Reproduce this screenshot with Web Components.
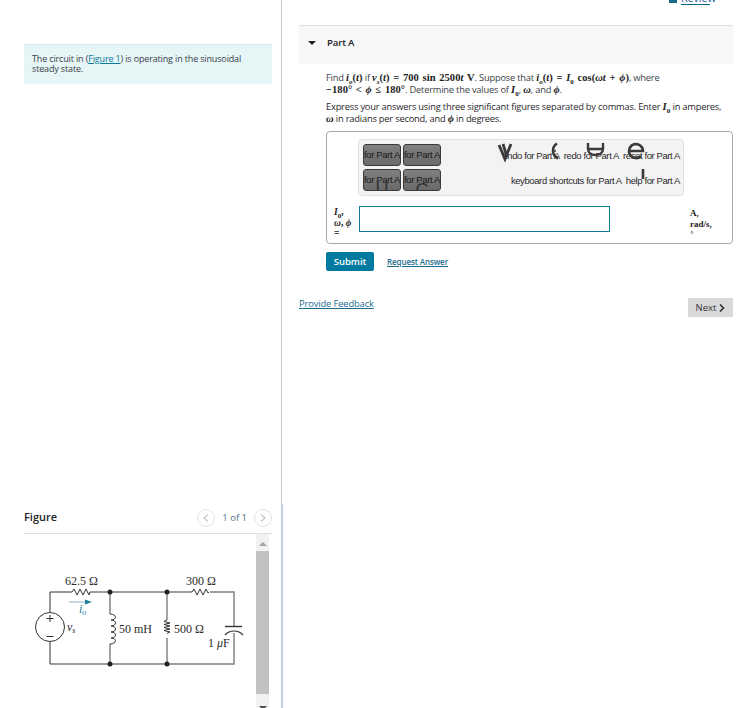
<!DOCTYPE html>
<html><head><meta charset="utf-8"><style>
html,body{margin:0;padding:0;background:#fff}
body{font-family:"Open Sans","Noto Sans",sans-serif;color:#2c3338}
</style></head><body>
<x-app>
  <x-intro slot="left">The circuit in (<a>Figure 1</a>) is operating in the sinusoidal steady state.</x-intro>
  <x-figure slot="left"></x-figure>
  <x-part slot="right"></x-part>
</x-app>
<script>
const def=(name,html)=>customElements.define(name,class extends HTMLElement{constructor(){super();this.attachShadow({mode:'open'}).innerHTML=html;}});
def('x-app',`<style>
:host{display:grid;grid-template-columns:281px 2px 1fr;width:753px;height:708px;overflow:hidden}
.l{display:flex;flex-direction:column;padding:44px 9px 0 24px;min-width:0}
.d{background:linear-gradient(90deg,#c3c8cd 0 1px,transparent 1px) 0 0/100% 504px no-repeat,linear-gradient(#fff 0 504px,#bccfe2 504px)}
.r{padding-left:16px;padding-right:20px;min-width:0;position:relative}
</style><div class="l"><slot name="left"></slot></div><div class="d"></div><div class="r"><slot name="right"></slot></div>`);
def('x-intro',`<style>
:host{display:block;box-sizing:border-box;height:40px;background:#e6f5f6;border-top:1px solid #dce3e4;padding:9px 8px;font-size:9px;line-height:10px;letter-spacing:-.15px;color:#3a4248}
::slotted(a){color:#0b7a9b;text-decoration:underline}
</style><slot></slot>`);
def('x-figure',`<style>
:host{display:block;margin-top:420px}
header{display:flex;align-items:center;height:27px;border-bottom:1px solid #dcdfe2;font-size:11px;font-weight:600;color:#1c2226;box-sizing:content-box;padding-bottom:2px}
b{font-weight:600;flex:1;position:relative;top:-1px}
.n{display:flex;align-items:center;gap:7px;font-size:9.5px;font-weight:400;color:#55707f}
.c{width:16px;height:16px;border:1px solid #dfe3e6;border-radius:50%;display:flex;align-items:center;justify-content:center}
.body{display:flex;height:175px}
.pic{flex:1}
.sb{width:13px;margin-left:auto;margin-right:3px;background:#f1f1f1;display:flex;flex-direction:column;align-items:center}
.sb i{display:block;width:0;height:0;border:4px solid transparent;border-top:0;border-bottom:4px solid #a3a3a3;margin:8px 0 5px}
.th{width:100%;height:143px;background:#c1c1c1;flex:none}
.sb i.b{border-bottom:0;border-top:4px solid #505050;margin-top:12px}
</style><header><b>Figure</b><div class="n"><span class="c"><svg width="8" height="10" viewBox="0 0 8 10"><path d="M6 1.5 2 5l4 3.5" fill="none" stroke="#c3c9ce" stroke-width="1.4"/></svg></span><span>1 of 1</span><span class="c"><svg width="8" height="10" viewBox="0 0 8 10"><path d="m2 1.5 4 3.5-4 3.5" fill="none" stroke="#c3c9ce" stroke-width="1.4"/></svg></span></div></header>
<div class="body"><div class="pic"><x-circuit></x-circuit></div><div class="sb"><i></i><div class="th"></div><i class="b"></i></div></div>`);
def('x-circuit',`<style>:host{display:block}svg{display:block;overflow:visible}
text{font-family:"Liberation Serif",serif;font-size:12px;fill:#2b2b2b}</style>
<svg width="232" height="175" viewBox="24 533 232 175">
<g fill="none" stroke="#7d7d7d" stroke-width="1.4">
<path d="M110 591H167M90 591H110M167 591H192M210 591H234V625M234 632V663H50"/>
<path d="M110 591V613M110 643V663M167 591V619M167 637V663"/>
</g>
<g fill="none" stroke="#333" stroke-width="1">
<path d="M50 591H72"/><path d="M50 591V611M50 641V663"/>
<circle cx="50" cy="626" r="14.5"/>
<path d="M72 591l2-3 3 6 3-6 3 6 3-6 3 6 1-3M192 591l2-3 3 6 3-6 3 6 3-6 2 4 1-1"/>
<path d="M110 613c7 0 7 6 1 6 6 0 6 6 0 6 6 0 6 6 0 6 6 0 6 6 0 6 6 0 6 6-1 6"/>
<path d="M167 619l-3 1.5 6 1.5-6 1.5 6 1.5-6 1.5 6 1.5-6 1.5 6 1.5-3 1.5"/>
<path d="M225 625.5H242" stroke-width="1.4"/><path d="M225 634c3-3.5 6-4 9-4s6 .5 9 4" stroke-width="1.2"/>
<path d="M50 614v7M46.5 617.5H53.5M46.5 635.5H53.5"/>
</g>
<g fill="#222"><circle cx="110" cy="591" r="2.5"/><circle cx="167" cy="591" r="2.5"/><circle cx="110" cy="663" r="2.5"/><circle cx="167" cy="663" r="2.5"/></g>
<path d="M69 601H88" stroke="#8db6c6" stroke-width="1"/><path d="M92 601l-7-2.5v5z" fill="#1f7c9b"/>
<text x="65" y="584">62.5 Ω</text><text x="186" y="584">300 Ω</text><text x="119" y="632">50 mH</text><text x="174" y="632">500 Ω</text><text x="208" y="646">1 <tspan font-style="italic">μ</tspan>F</text>
<text x="67" y="630" font-style="italic">v<tspan font-size="8" dy="2">s</tspan></text>
<text x="79" y="612" font-style="italic" style="fill:#1f7c9b">i<tspan font-size="8" dy="2">o</tspan></text>
</svg>`);
def('x-math',`<style>:host{display:inline;font-family:"Liberation Serif",serif;font-weight:700;color:#222;font-size:10.5px;letter-spacing:.05px;word-spacing:1px}
::slotted(sub){font-size:7px;line-height:0}</style><slot></slot>`);
def('x-part',`<style>
:host{display:block;font-size:9.3px;line-height:12px;letter-spacing:-.2px;color:#3a4248}
.rev{height:25px;overflow:hidden;display:flex;justify-content:flex-end;padding-right:23px;gap:4px;box-sizing:border-box}
.rev i{width:8px;height:3px;background:#1a6a85}
.rev a{margin-top:-9px;font-size:11px;line-height:13px;height:13px;color:#1e5f96;border-bottom:1px solid #0b6a8a;width:29px}
.hd{box-sizing:border-box;height:39px;background:#f7f7f7;border-top:1px solid #dfe1e2;display:flex;align-items:center;color:#1c2226;padding-bottom:4px}
.tr{width:0;height:0;border:4px solid transparent;border-top:4.5px solid #222;border-bottom:0;margin:0 11px 0 9px}
.hd b{font-weight:600;font-size:9.7px}
.c{padding:8px 0 0 27px}
p{margin:0 0 5px}
.em{color:#1f262b;font-weight:500}
.act{display:flex;align-items:center;gap:13px;margin-top:8px}
.sub{width:48px;height:19px;background:#007a9f;color:#fff;border-radius:2px;font-weight:600;font-size:9.5px;display:flex;align-items:center;justify-content:center;letter-spacing:0}
.act a{color:#1e6b8f;font-weight:600;font-size:8px;text-decoration:underline;letter-spacing:-.1px}
.foot{display:flex;justify-content:space-between;align-items:flex-start;margin-top:27px}
.foot a{color:#1e6b8f;text-decoration:underline;letter-spacing:-.1px}
.next{width:45px;height:19px;background:#d9d9d9;display:flex;align-items:center;justify-content:center;font-size:9.5px;color:#333;gap:3px;letter-spacing:0}
</style>
<div class="rev"><i></i><a>Review</a></div>
<div class="hd"><span class="tr"></span><b>Part A</b></div>
<div class="c">
<p>Find <x-math><i>i</i><sub><i>o</i></sub>(<i>t</i>)</x-math> if <x-math><i>v</i><sub><i>s</i></sub>(<i>t</i>) = 700 sin 2500<i>t</i> V</x-math>. Suppose that <x-math><i>i</i><sub><i>o</i></sub>(<i>t</i>) = <i>I</i><sub>0</sub> cos(<i>ωt</i> + <i>ϕ</i>)</x-math>, where<br><x-math>−180° &lt; <i>ϕ</i> ≤ 180°</x-math>. Determine the values of <x-math><i>I</i><sub>0</sub></x-math>, <x-math><i>ω</i></x-math>, and <x-math><i>ϕ</i></x-math>.</p>
<p class="em">Express your answers using three significant figures separated by commas. Enter <x-math><i>I</i><sub>0</sub></x-math> in amperes,<br><x-math><i>ω</i></x-math> in radians per second, and <x-math><i>ϕ</i></x-math> in degrees.</p>
</div>
<div style="margin-left:27px"><x-answer></x-answer>
<div class="act"><span class="sub">Submit</span><a>Request Answer</a></div></div>
<div class="foot"><a>Provide Feedback</a><span class="next">Next <svg width="6" height="8" viewBox="0 0 6 8"><path d="m1 .5 3.5 3.5L1 7.5" fill="none" stroke="#333" stroke-width="1.6"/></svg></span></div>`);
def('x-answer',`<style>
:host{display:block;box-sizing:border-box;width:407px;height:113px;margin-top:6px;border:1px solid #a9a9a9;border-radius:4px;padding:7px 0 0 0;font-family:"Liberation Serif",serif;color:#222;letter-spacing:0}
.row{display:grid;grid-template-columns:32px 251px 1fr;margin-top:10px;font-size:9.5px;line-height:10.5px;font-weight:700}
.lab{padding:1px 0 0 7px;white-space:nowrap}
.lab sub{font-size:7px;line-height:0}
.inp{box-sizing:border-box;height:26px;border:1px solid #0b7a9b}
.un{padding:2px 0 0 80px;font-size:9px;white-space:nowrap}
</style>
<x-toolbar></x-toolbar>
<div class="row"><div class="lab"><i>I</i><sub>0</sub>,<br><i>ω</i>, <i>ϕ</i><br>=</div><div class="inp"></div><div class="un">A,<br>rad/s,<br><span style="font-weight:400">°</span></div></div>`);
def('x-toolbar',`<style>
:host{display:flex;box-sizing:border-box;width:326px;height:57px;margin-left:31px;background:#f3f3f3;border:1px solid #e2e2e2;border-radius:4px;font:9.5px/12px "Liberation Sans",sans-serif;letter-spacing:-.4px;color:#222;position:relative}
.g{display:grid;grid-template-columns:38px 38px;gap:3px 2px;padding:4px 0 0 0;margin-left:4px;align-content:start}
.b{position:relative;height:22px;overflow:hidden;background:linear-gradient(#7f7f7f,#6a6a6a);border:1px solid #3a3a3a;border-radius:3px;box-sizing:border-box;line-height:20px;white-space:nowrap;color:#1b1b1b;text-align:center;letter-spacing:-.35px}
.b u{position:absolute;text-decoration:none;left:0;right:0;text-align:center;font-size:18px;line-height:18px;letter-spacing:0}
.t{flex:1;display:flex;flex-direction:column;align-items:flex-end;padding:10px 3px 0 0;gap:13px;white-space:nowrap}
.t span{display:flex;gap:4px;color:#2a2a2a}
svg{position:absolute;left:-1px;top:-1px;pointer-events:none}
</style>
<div class="g"><div class="b">for Part A</div><div class="b">for Part A</div><div class="b">for Part A<u style="top:9px;color:#333">U</u></div><div class="b">for Part A<u style="top:11px;color:#333">C</u></div></div>
<div class="t"><span><a>undo for Part A</a><a>redo for Part A</a><a>reset for Part A</a></span><span><a>keyboard shortcuts for Part A</a><a>help for Part A</a></span></div>
<svg width="326" height="57" viewBox="358 139 326 57" fill="none" stroke="#3a3a3a">
<path d="M499 145l6 14 6-15M503 144l4 13" stroke-width="2.8"/>
<path d="M557 143.5c-5 3-6 11 1 15" stroke-width="2.6"/><path d="M552 151h4" stroke-width="1.5"/>
<path d="M588 143v6c0 8 15 8 15 0v-6M588 149h15" stroke-width="2.4"/>
<path d="M630 151h13a7 7 0 1 0-2 5" stroke-width="2.6"/>
<path d="M643 169v10" stroke-width="2.6"/>
</svg>`);
</script>
</body></html>
